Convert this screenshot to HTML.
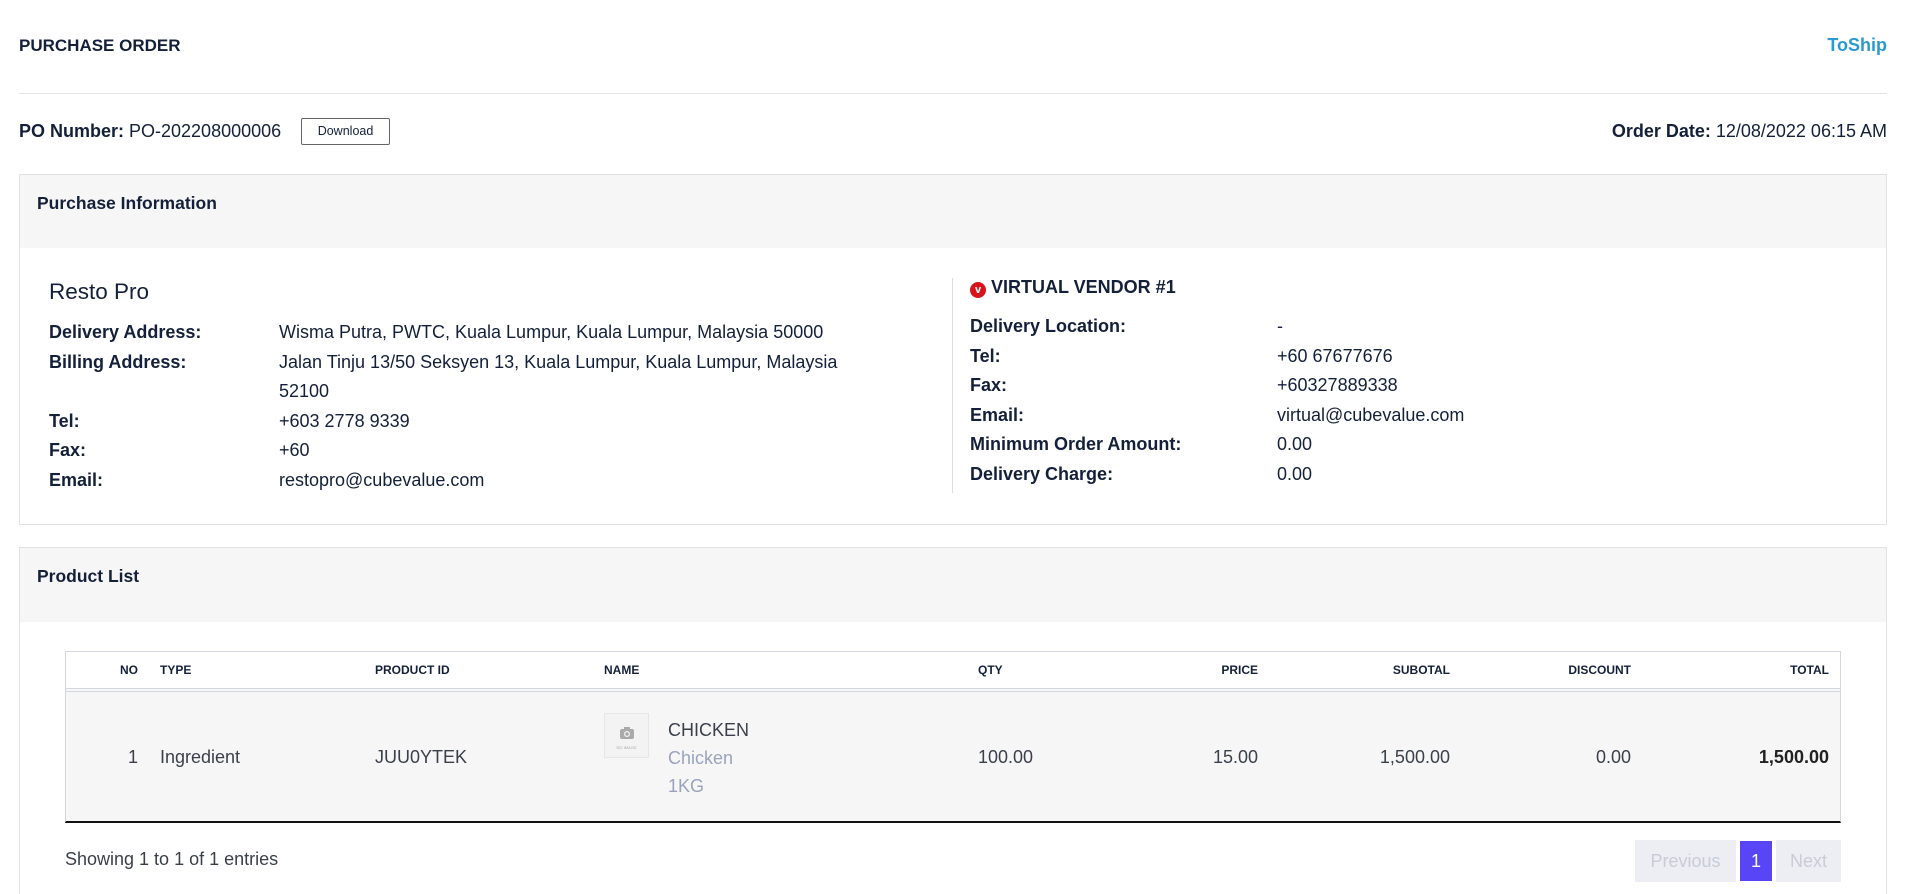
<!DOCTYPE html>
<html><head><meta charset="utf-8"><style>
*{margin:0;padding:0;box-sizing:border-box}
html,body{width:1909px;height:894px;overflow:hidden}
body{background:#fff;font-family:"Liberation Sans",sans-serif;color:#14203a;position:relative}
.a{position:absolute;white-space:nowrap}
.b{font-weight:bold}
.f19{font-size:18px}
.th{font-size:12px;font-weight:bold;top:663px}
.td{font-size:18px;top:747px;color:#3a3f4a}
</style></head><body>
<div class="a b" style="left:19px;top:36px;font-size:17px">PURCHASE ORDER</div>
<div class="a b" style="right:22px;top:35px;font-size:18px;color:#2a9ad0">ToShip</div>
<div class="a" style="left:19px;right:22px;top:93px;height:1px;background:#e4e4e4"></div>
<div class="a f19" style="left:19px;top:121px"><b>PO Number:</b> PO-202208000006</div>
<div class="a" style="left:301px;top:118px;width:89px;height:27px;border:1px solid #666;border-radius:2px;font-size:12.5px;text-align:center;line-height:25px">Download</div>
<div class="a f19" style="right:22px;top:121px"><b>Order Date:</b> 12/08/2022 06:15 AM</div>

<div class="a" style="left:19px;top:174px;width:1868px;height:351px;border:1px solid #e2e2e2"></div>
<div class="a" style="left:20px;top:175px;width:1866px;height:73px;background:#f6f6f6"></div>
<div class="a b" style="left:37px;top:193px;font-size:17.5px">Purchase Information</div>
<div class="a" style="left:49px;top:279px;font-size:22.5px">Resto Pro</div>
<div class="a f19 b" style="left:49px;top:318px;line-height:29.6px">Delivery Address:<br>Billing Address:<br><br>Tel:<br>Fax:<br>Email:</div>
<div class="a f19" style="left:279px;top:318px;line-height:29.6px">Wisma Putra, PWTC, Kuala Lumpur, Kuala Lumpur, Malaysia 50000<br>Jalan Tinju 13/50 Seksyen 13, Kuala Lumpur, Kuala Lumpur, Malaysia<br>52100<br>+603 2778 9339<br>+60<br>restopro@cubevalue.com</div>
<div class="a" style="left:952px;top:278px;width:1px;height:215px;background:#ddd"></div>
<div class="a" style="left:970px;top:282px;width:16px;height:16px;border-radius:50%;background:#d8141c;color:#fff;font-size:11px;font-weight:bold;text-align:center;line-height:16px">v</div>
<div class="a" style="left:991px;top:277px;font-size:18px;font-weight:bold">VIRTUAL VENDOR #1</div>
<div class="a f19 b" style="left:970px;top:312px;line-height:29.6px">Delivery Location:<br>Tel:<br>Fax:<br>Email:<br>Minimum Order Amount:<br>Delivery Charge:</div>
<div class="a f19" style="left:1277px;top:312px;line-height:29.6px">-<br>+60 67677676<br>+60327889338<br>virtual@cubevalue.com<br>0.00<br>0.00</div>

<div class="a" style="left:19px;top:547px;width:1868px;height:347px;border:1px solid #e2e2e2;border-bottom:none"></div>
<div class="a" style="left:20px;top:548px;width:1866px;height:74px;background:#f6f6f6"></div>
<div class="a b" style="left:37px;top:566px;font-size:17.5px">Product List</div>

<div class="a" style="left:65px;top:651px;width:1776px;height:172px;border:1px solid #d3d6de;border-bottom:2px solid #111"></div>
<div class="a" style="left:66px;top:688px;width:1774px;height:133px;background:#f6f6f6;border-top:4px double #d3d6de"></div>
<div class="a th" style="right:1771px">NO</div>
<div class="a th" style="left:160px">TYPE</div>
<div class="a th" style="left:375px">PRODUCT ID</div>
<div class="a th" style="left:604px">NAME</div>
<div class="a th" style="left:978px">QTY</div>
<div class="a th" style="right:651px">PRICE</div>
<div class="a th" style="right:459px">SUBOTAL</div>
<div class="a th" style="right:278px">DISCOUNT</div>
<div class="a th" style="right:80px">TOTAL</div>
<div class="a td" style="right:1771px">1</div>
<div class="a td" style="left:160px">Ingredient</div>
<div class="a td" style="left:375px">JUU0YTEK</div>
<div class="a" style="left:604px;top:713px;width:45px;height:45px;background:#f3f3f3;border:1px solid #e6e6e6;text-align:center">
<svg width="16" height="14" viewBox="0 0 16 14" style="margin-top:12px"><rect x="1" y="3" width="14" height="10" rx="2" fill="#aaa"/><rect x="5" y="1" width="6" height="3" fill="#aaa"/><circle cx="8" cy="8" r="3" fill="#f3f3f3"/><circle cx="8" cy="8" r="1.8" fill="#aaa"/></svg>
<div style="font-size:4px;color:#aaa;line-height:5px">NO IMAGE</div></div>
<div class="a" style="left:668px;top:716px;font-size:18px;line-height:28px;color:#3a3f4a">CHICKEN<br><span style="color:#9aa3bd">Chicken<br>1KG</span></div>
<div class="a td" style="left:978px">100.00</div>
<div class="a td" style="right:651px">15.00</div>
<div class="a td" style="right:459px">1,500.00</div>
<div class="a td" style="right:278px">0.00</div>
<div class="a td b" style="right:80px;color:#222">1,500.00</div>

<div class="a" style="left:65px;top:849px;font-size:18px;color:#3a3f4a">Showing 1 to 1 of 1 entries</div>
<div class="a" style="left:1635px;top:840px;width:101px;height:42px;background:#eceef3;color:#c8ccd6;font-size:18px;text-align:center;line-height:42px">Previous</div>
<div class="a" style="left:1740px;top:841px;width:32px;height:40px;background:#5845f5;color:#fff;font-size:18px;text-align:center;line-height:40px">1</div>
<div class="a" style="left:1776px;top:840px;width:65px;height:42px;background:#eceef3;color:#c8ccd6;font-size:18px;text-align:center;line-height:42px">Next</div>
</body></html>
